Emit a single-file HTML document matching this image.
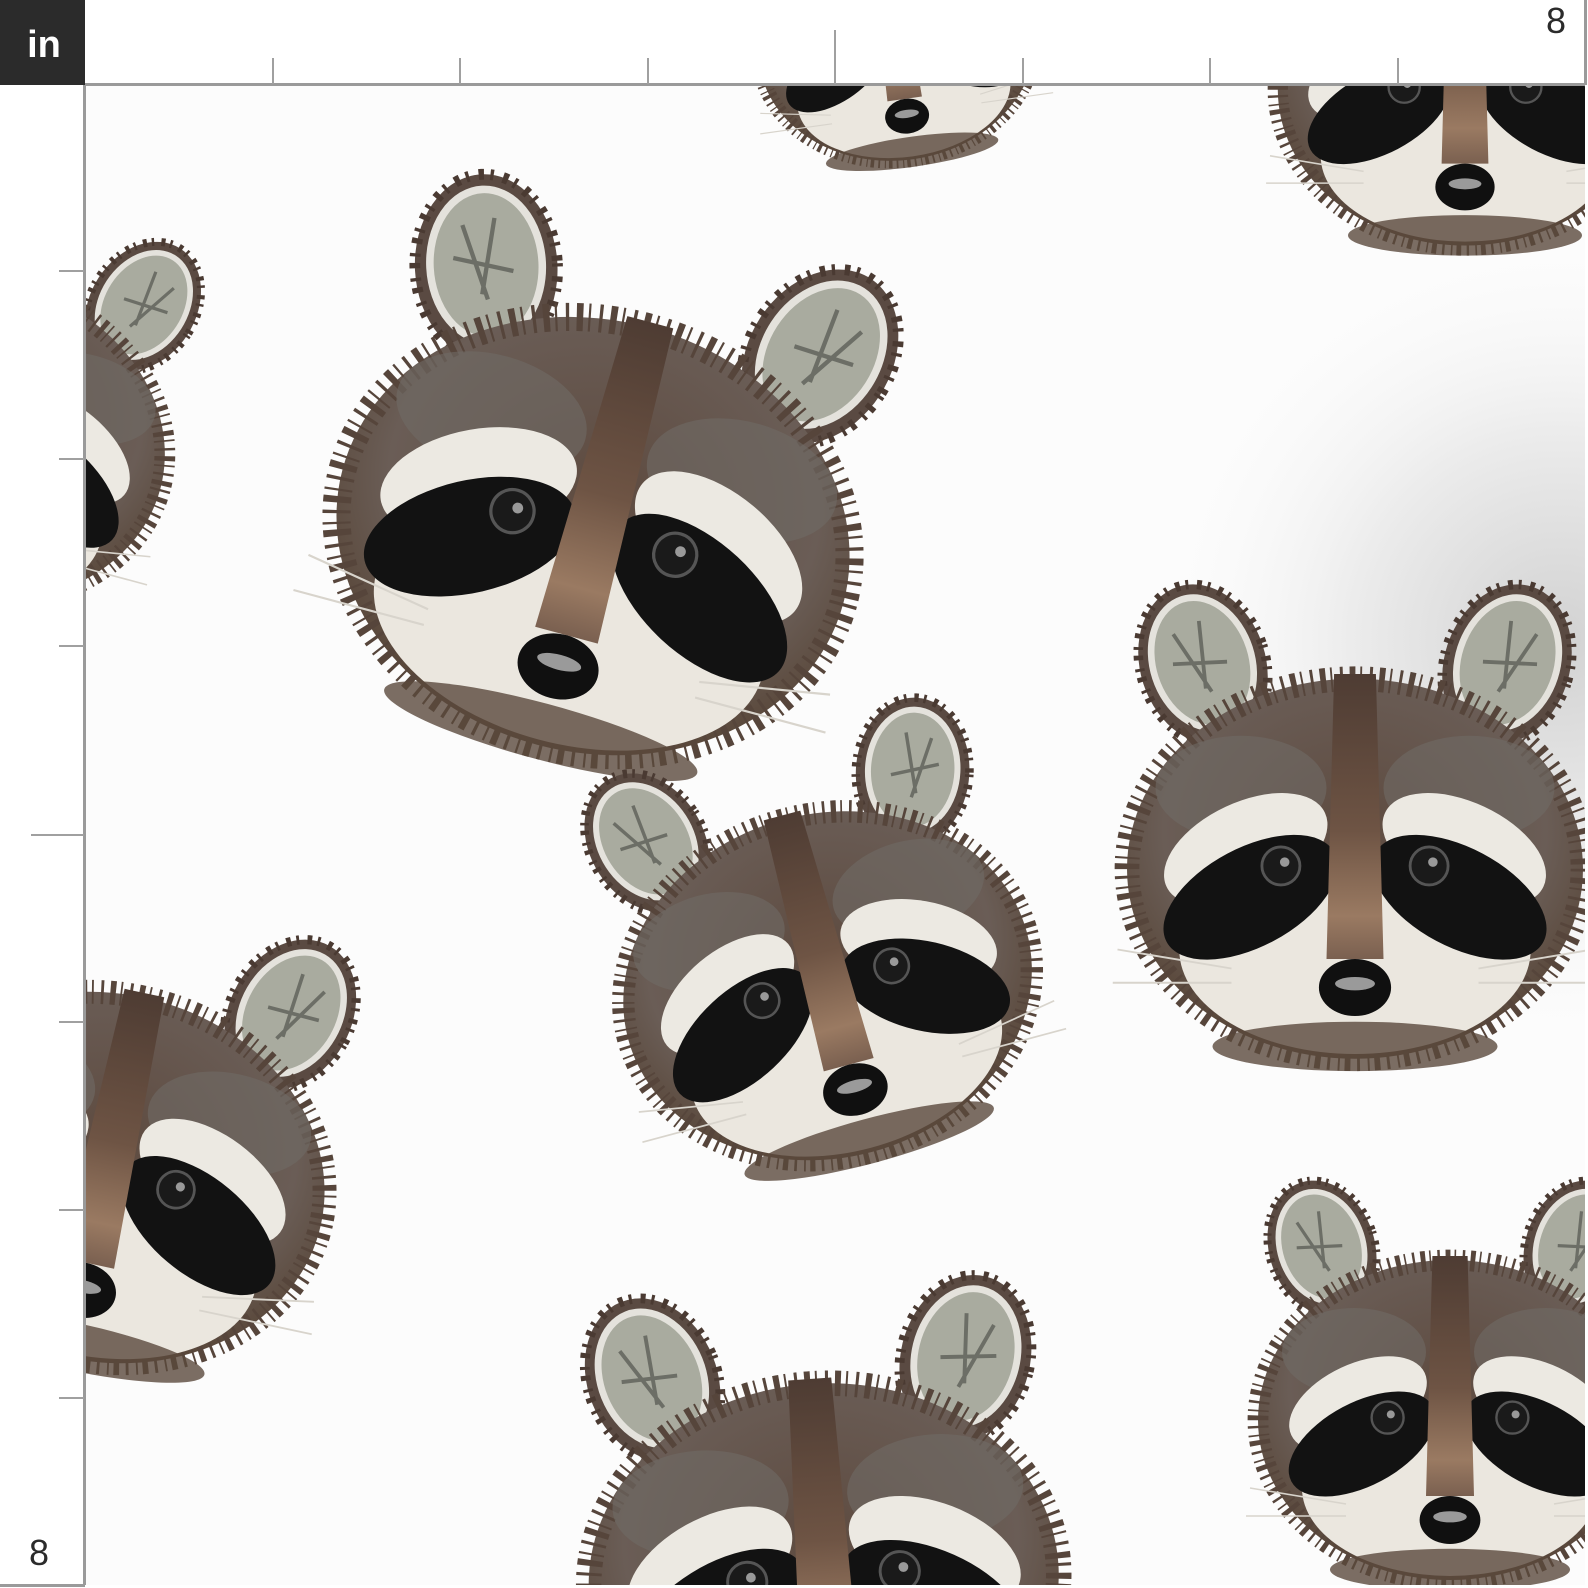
<!DOCTYPE html>
<html><head><meta charset="utf-8"><style>
html,body{margin:0;padding:0;background:#fff;width:1588px;height:1588px;overflow:hidden;}
body{position:relative;font-family:"Liberation Sans",sans-serif;}
svg{position:absolute;left:0;top:0;display:block;}
</style></head><body>
<svg width="1588" height="1588" viewBox="0 0 1588 1588" xmlns="http://www.w3.org/2000/svg">
<defs>
<radialGradient id="sh" cx="1560" cy="640" r="420" gradientUnits="userSpaceOnUse">
<stop offset="0" stop-color="#d2d2d2"/><stop offset="0.5" stop-color="#ececec"/><stop offset="1" stop-color="#fdfdfd" stop-opacity="0"/></radialGradient>
<linearGradient id="stripe" x1="0" y1="0" x2="0" y2="1">
<stop offset="0" stop-color="#4e3c33"/><stop offset="0.55" stop-color="#6e5444"/><stop offset="0.85" stop-color="#9a7a62"/><stop offset="1" stop-color="#7a6050"/></linearGradient>
<radialGradient id="headg" cx="0.5" cy="0.4" r="0.6">
<stop offset="0" stop-color="#5e4b40"/><stop offset="0.7" stop-color="#6a5d56"/><stop offset="1" stop-color="#584638"/></radialGradient>
<clipPath id="area"><rect x="85" y="85" width="1500" height="1500"/></clipPath>
<g id="rac">
 <g transform="translate(-160,-190) rotate(-18)">
  <ellipse rx="66" ry="86" fill="#5a4a42" stroke="#4a3a32" stroke-width="10" stroke-dasharray="3 9 5 6"/>
  <ellipse rx="52" ry="70" cy="-2" fill="#a9ab9f" stroke="#e4e2dc" stroke-width="7"/>
  <path d="M-20,-40 L0,30 M10,-45 L-5,25 M-30,-10 L25,5" stroke="#6c6e66" stroke-width="4"/>
 </g>
 <g transform="translate(160,-190) rotate(18)">
  <ellipse rx="66" ry="86" fill="#5a4a42" stroke="#4a3a32" stroke-width="10" stroke-dasharray="3 9 5 6"/>
  <ellipse rx="52" ry="70" cy="-2" fill="#a9ab9f" stroke="#e4e2dc" stroke-width="7"/>
  <path d="M20,-40 L0,30 M-10,-45 L5,25 M30,-10 L-25,5" stroke="#6c6e66" stroke-width="4"/>
 </g>
 <ellipse cx="0" cy="25" rx="240" ry="200" fill="url(#headg)" stroke="#56453b" stroke-width="26" stroke-dasharray="3 7 6 5 2 8"/>
 <ellipse cx="-120" cy="-60" rx="90" ry="55" fill="#6f6a66" opacity="0.6"/>
 <ellipse cx="120" cy="-60" rx="90" ry="55" fill="#6f6a66" opacity="0.6"/>
 <ellipse cx="0" cy="110" rx="185" ry="110" fill="#ebe7df"/>
 <ellipse cx="-115" cy="5" rx="92" ry="50" transform="rotate(-25 -115 5)" fill="#ece9e2"/>
 <ellipse cx="115" cy="5" rx="92" ry="50" transform="rotate(25 115 5)" fill="#ece9e2"/>
 <ellipse cx="0" cy="212" rx="150" ry="26" fill="#5a483c" opacity="0.8"/>
 <ellipse cx="-110" cy="55" rx="100" ry="52" transform="rotate(-28 -110 55)" fill="#121212"/>
 <ellipse cx="110" cy="55" rx="100" ry="52" transform="rotate(28 110 55)" fill="#121212"/>
 <circle cx="-78" cy="22" r="20" fill="#1a1a1a" stroke="#555" stroke-width="3"/>
 <circle cx="-74" cy="18" r="5" fill="#999"/>
 <circle cx="78" cy="22" r="20" fill="#1a1a1a" stroke="#555" stroke-width="3"/>
 <circle cx="82" cy="18" r="5" fill="#999"/>
 <path d="M-22,-180 L22,-180 L30,120 L-30,120 Z" fill="url(#stripe)"/>
 <path d="M-130,130 L-250,110 M-130,145 L-255,145 M130,130 L250,110 M130,145 L255,145" stroke="#d8d4cc" stroke-width="2"/>
 <ellipse cx="0" cy="150" rx="38" ry="30" fill="#101010"/>
 <ellipse cx="0" cy="146" rx="21" ry="7" fill="#9a9a9a"/>
</g>
</defs>

<rect x="0" y="0" width="1588" height="1588" fill="#fff"/>
<g clip-path="url(#area)">
 <rect x="85" y="85" width="1500" height="1500" fill="#fcfcfc"/>
 <rect x="85" y="85" width="1500" height="1500" fill="url(#sh)"/>
 <use href="#rac" transform="translate(895,30) rotate(-8) scale(0.58)"/>
 <use href="#rac" transform="translate(1465,70) rotate(0) scale(0.78)"/>
 <use href="#rac" transform="translate(-20,420) rotate(15) scale(0.8)"/>
 <use href="#rac" transform="translate(600,510) rotate(15) scale(1.08)"/>
 <use href="#rac" transform="translate(822,965) rotate(-15) scale(0.86)"/>
 <use href="#rac" transform="translate(1355,845) rotate(0) scale(0.95)"/>
 <use href="#rac" transform="translate(110,1155) rotate(12) scale(0.92)"/>
 <use href="#rac" transform="translate(822,1555) rotate(-4) scale(0.98)"/>
 <use href="#rac" transform="translate(1450,1400) rotate(0) scale(0.8)"/>
</g>

<rect x="0" y="0" width="85" height="85" fill="#2b2b2b"/>
<text x="44" y="57" font-family="Liberation Sans, sans-serif" font-weight="bold" font-size="38" fill="#fff" text-anchor="middle">in</text>
<line x1="85" y1="84.5" x2="1585" y2="84.5" stroke="#9a9a9a" stroke-width="3"/>
<line x1="84.5" y1="85" x2="84.5" y2="1585" stroke="#9a9a9a" stroke-width="3"/>
<line x1="1585.5" y1="0" x2="1585.5" y2="85" stroke="#9a9a9a" stroke-width="3"/>
<line x1="0" y1="1585.5" x2="85" y2="1585.5" stroke="#9a9a9a" stroke-width="3"/>
<g stroke="#a0a0a0" stroke-width="2">
 <line x1="273" y1="58" x2="273" y2="84"/>
 <line x1="460" y1="58" x2="460" y2="84"/>
 <line x1="648" y1="58" x2="648" y2="84"/>
 <line x1="835" y1="30" x2="835" y2="84"/>
 <line x1="1023" y1="58" x2="1023" y2="84"/>
 <line x1="1210" y1="58" x2="1210" y2="84"/>
 <line x1="1398" y1="58" x2="1398" y2="84"/>
 <line x1="59" y1="271" x2="84" y2="271"/>
 <line x1="59" y1="459" x2="84" y2="459"/>
 <line x1="59" y1="646" x2="84" y2="646"/>
 <line x1="31" y1="835" x2="84" y2="835"/>
 <line x1="59" y1="1022" x2="84" y2="1022"/>
 <line x1="59" y1="1210" x2="84" y2="1210"/>
 <line x1="59" y1="1398" x2="84" y2="1398"/>
</g>
<text x="1556" y="33" font-family="Liberation Sans, sans-serif" font-size="36" fill="#2b2b2b" text-anchor="middle">8</text>
<text x="39" y="1565" font-family="Liberation Sans, sans-serif" font-size="36" fill="#2b2b2b" text-anchor="middle">8</text>
</svg>
</body></html>
